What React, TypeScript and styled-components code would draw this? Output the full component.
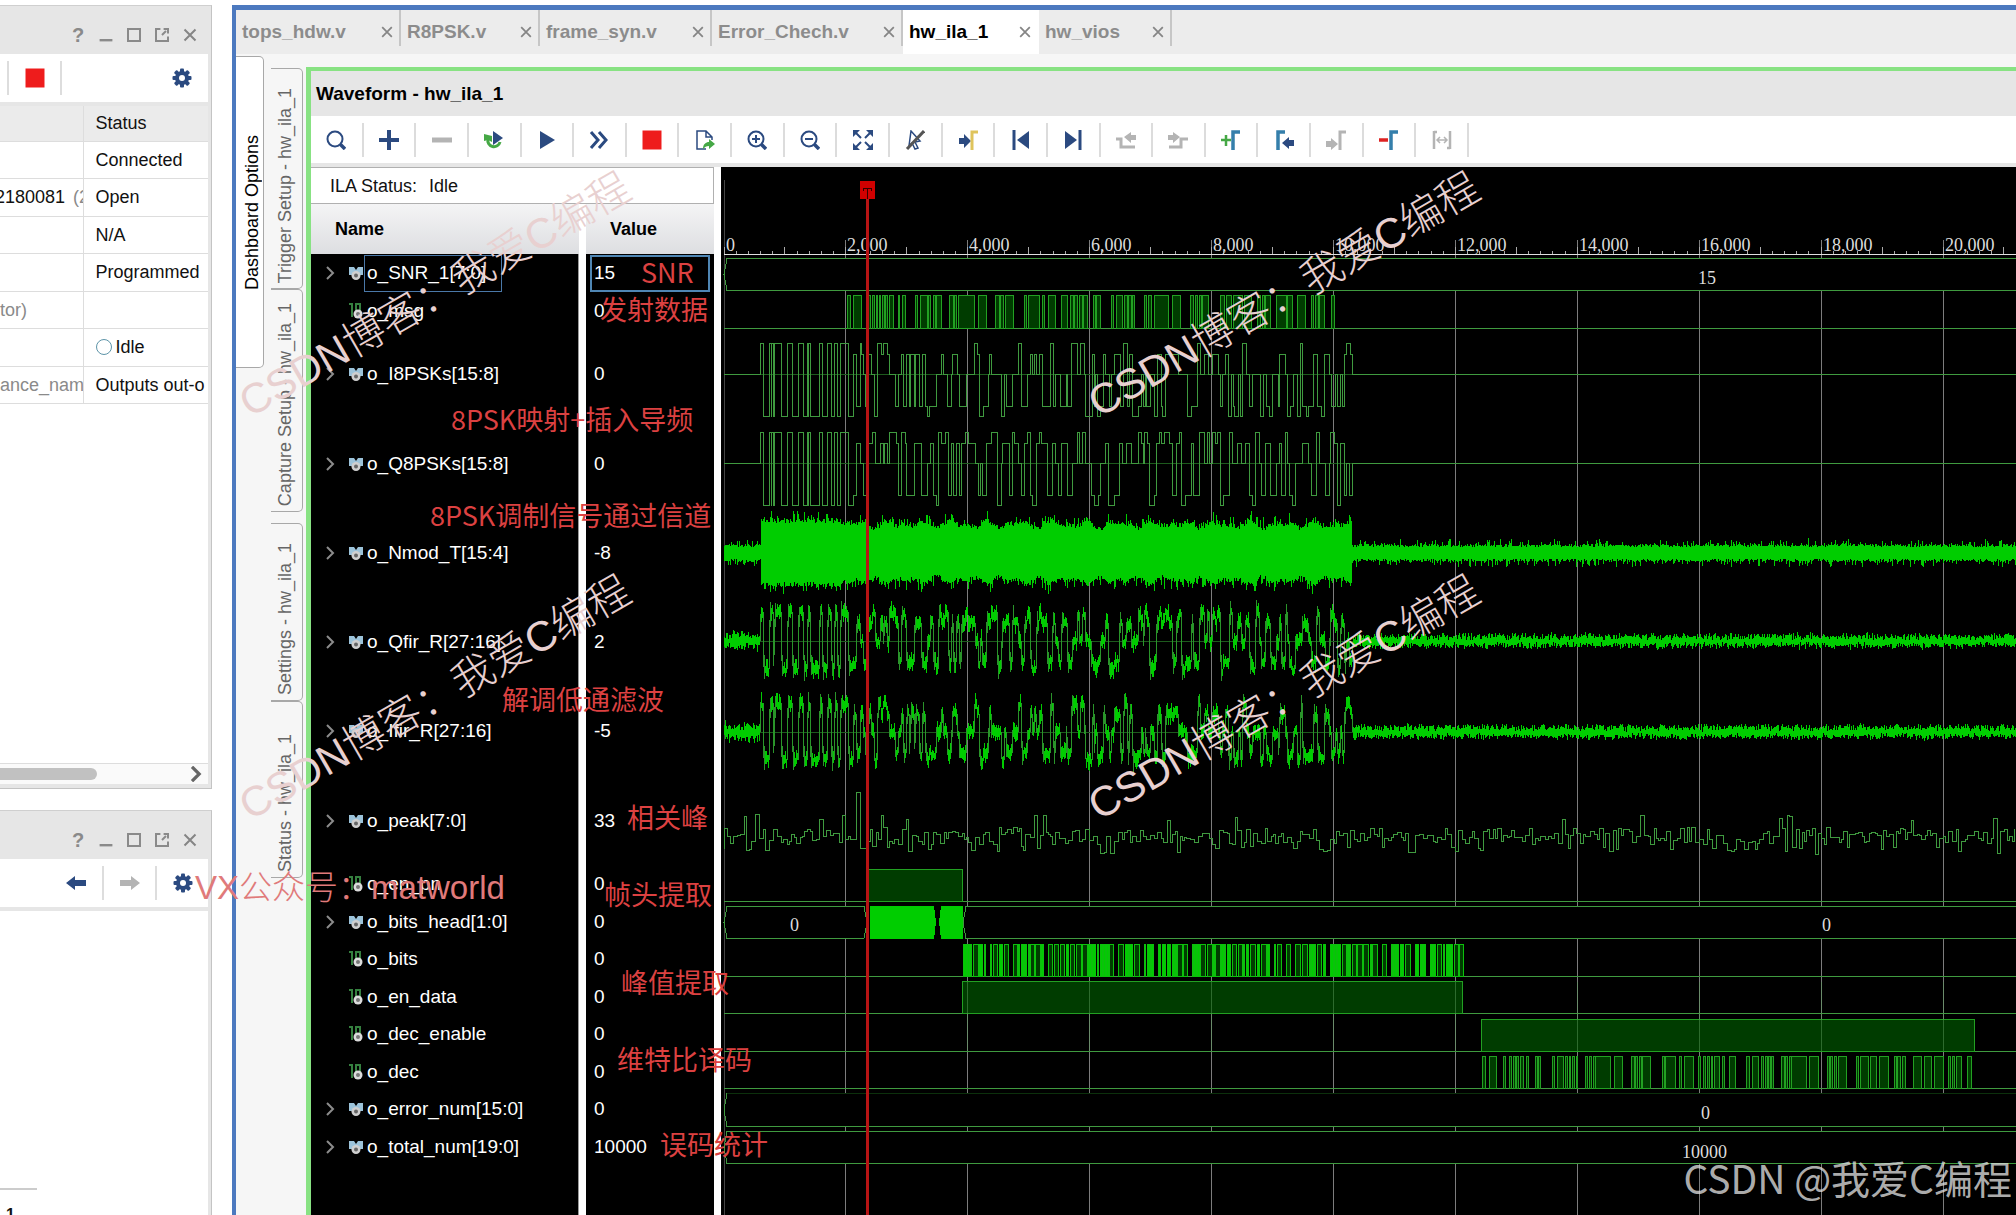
import React from "react";
import styled, { createGlobalStyle, css } from "styled-components";

const NAVY = "#2b4a80";
const GREY = "#b4b4b4";
const GREEN = "#45a845";

const Global = createGlobalStyle`
  * { box-sizing: border-box; }
  body { margin: 0; background: #fff; overflow: hidden; }
  button { border: 0; background: none; padding: 0; margin: 0; font: inherit; color: inherit; }
`;

const Page = styled.div`
  position: relative;
  display: flex;
  gap: 20px;
  height: 100vh;
  padding-top: 5px;
  overflow: hidden;
  font: 18px/24px "Liberation Sans", Arial, sans-serif;
  color: #111;
`;

/* ---------- left side ---------- */

const Side = styled.aside`
  flex: none;
  width: 212px;
  display: flex;
  flex-direction: column;
  gap: 21px;
`;

const Panel = styled.section<{ $grow?: boolean }>`
  display: flex;
  flex-direction: column;
  border-top: 1px solid #cfcfcf;
  border-right: 1px solid #c4c4c4;
  ${(p) => (p.$grow ? "flex: 1;" : "height: 784px; border-bottom: 1px solid #c4c4c4; padding-bottom: 4px;")}
  padding-right: 3px;
  background: #e6e6e6;
`;

const PanelHead = styled.header`
  display: flex;
  justify-content: flex-end;
  align-items: center;
  height: 48px;
  padding: 10px 4px 0 0;
`;

const HeadButton = styled.button`
  width: 28px;
  height: 28px;
  display: grid;
  place-items: center;
  color: #8a8a8a;
  font-size: 20px;
  font-weight: 700;
`;

const SideTools = styled.div`
  display: flex;
  justify-content: flex-end;
  align-items: center;
  height: 48px;
  background: #fff;
`;

const SideTool = styled.button<{ $rule?: boolean }>`
  width: 53px;
  height: 34px;
  display: grid;
  place-items: center;
  ${(p) => p.$rule && "border-left: 2px solid #ddd;"}
`;

const SideSpace = styled.div`
  width: 95px;
  height: 34px;
  border-left: 2px solid #ddd;
`;

const SideBody = styled.div`
  flex: 1;
  margin-top: 4px;
  background: #fff;
  overflow: hidden;
`;

const StatusTable = styled.table`
  width: 100%;
  table-layout: fixed;
  border-collapse: collapse;
  thead tr { height: 35px; }
  tbody tr { height: 37px; }
  tbody tr:nth-child(even) { height: 38px; }
  th, td {
    padding: 0;
    border-bottom: 1px solid #ddd;
    text-align: left;
    font-weight: 400;
    white-space: nowrap;
    overflow: hidden;
  }
  th { background: #ebebeb; }
  th:last-child, td:last-child { width: 125px; padding-left: 12px; border-left: 1px solid #ddd; }
`;

const Path = styled.td<{ $shift?: number }>`
  color: #8a8a8a;
  text-indent: ${(p) => p.$shift || 0}px;
  b { margin-right: 3px; font-weight: 400; color: #111; }
`;

const Ring = styled.span`
  display: inline-block;
  width: 16px;
  height: 16px;
  margin-right: 4px;
  border: 1px solid #5d94a8;
  border-radius: 50%;
  vertical-align: -2px;
`;

const ScrollRow = styled.div`
  display: flex;
  align-items: center;
  justify-content: space-between;
  height: 21px;
  padding-right: 4px;
  background: #fafafa;
  border-top: 1px solid #ddd;
`;

const Thumb = styled.div`
  width: 97px;
  height: 12px;
  border-radius: 0 6px 6px 0;
  background: #c1c1c1;
`;

const Foot = styled.div`
  display: flex;
  flex-direction: column;
  justify-content: flex-end;
  height: 100%;
  b { height: 12px; padding-left: 6px; font-size: 16px; line-height: 24px; overflow: hidden; }
`;

const FootRule = styled.hr`
  width: 37px;
  margin: 0 0 13px;
  border: 0;
  border-top: 2px solid #ccc;
`;

/* ---------- main window ---------- */

const Main = styled.main`
  flex: 1;
  min-width: 0;
  display: flex;
  flex-direction: column;
  border: solid #4c79bf;
  border-width: 5px 0 0 4px;
  background: #f6f6f6;
`;

const Tabs = styled.nav`
  display: flex;
  height: 44px;
  background: #ececec;
  font-size: 19px;
  font-weight: 700;
`;

const Tab = styled.button<{ $w: number; $on?: boolean }>`
  display: flex;
  justify-content: space-between;
  align-items: center;
  width: ${(p) => p.$w}px;
  height: ${(p) => (p.$on ? 44 : 36)}px;
  padding: ${(p) => (p.$on ? "0 7px 0 6px" : "8px 5px 0 6px")};
  color: ${(p) => (p.$on ? "#000" : "#8c8c8c")};
  background: ${(p) => (p.$on ? "#fff" : "none")};
  border-right: ${(p) => (p.$on ? 0 : 2)}px solid #c6c6c6;
`;

const Body = styled.div`
  flex: 1;
  min-height: 0;
  display: flex;
`;

const Rail = styled.div<{ $w: number; $top: number; $right: number }>`
  flex: none;
  display: flex;
  flex-direction: column;
  width: ${(p) => p.$w}px;
  margin-right: ${(p) => p.$right}px;
  padding-top: ${(p) => p.$top}px;
`;

const RailTab = styled.button<{ $h: number; $on?: boolean; $gap?: boolean }>`
  display: flex;
  align-items: ${(p) => (p.$on ? "center" : "flex-end")};
  justify-content: ${(p) => (p.$on ? "flex-end" : "center")};
  padding: ${(p) => (p.$on ? "2px 0 0" : "0 4px 5px 0")};
  height: ${(p) => p.$h}px;
  margin-bottom: ${(p) => (p.$gap ? 11 : 0)}px;
  border: 1px solid #a8a8a8;
  border-left: 0;
  border-radius: 0 5px 5px 0;
  color: ${(p) => (p.$on ? "#000" : "#666")};
  background: ${(p) => (p.$on ? "#fff" : "#f6f6f6")};
  span { writing-mode: vertical-rl; transform: rotate(180deg); white-space: nowrap; line-height: 22px; }
`;

const Frame = styled.section`
  flex: 1;
  min-width: 0;
  margin-top: 13px;
  display: flex;
  flex-direction: column;
  border: solid #88e283;
  border-width: 4px 0 0 5px;
`;

const Title = styled.h1`
  margin: 0;
  padding: 0 5px;
  font-size: 19px;
  line-height: 45px;
  color: #000;
  background: #e6e6e6;
`;

const ToolBar = styled.div`
  height: 51px;
  background: #fff;
  border-bottom: 4px solid #e6e6e6;
`;

const Tools = styled.div`
  display: grid;
  grid-template-columns: repeat(22, 1fr);
  align-items: center;
  width: 1158px;
  height: 47px;
`;

const Tool = styled.button`
  display: grid;
  place-items: center;
  height: 34px;
  border-right: 2px solid #dcdcdc;
`;

const Work = styled.div`
  flex: 1;
  min-height: 0;
  display: flex;
`;

const Signals = styled.div`
  flex: none;
  width: 410px;
  border-right: 7px solid #fff;
  background: linear-gradient(to right, #000 267px, #999 267px 268px, #fff 268px 275px, #000 275px);
`;

const Status = styled.div`
  height: 37px;
  padding: 6px 19px;
  background: #fff;
  border: 1px solid #b0b0b0;
  border-left: 0;
  span { margin-left: 12px; }
`;

const SignalTable = styled.table`
  width: 403px;
  table-layout: fixed;
  border-collapse: collapse;
  th {
    height: 50px;
    padding: 0 0 0 24px;
    text-align: left;
    color: #000;
    background: linear-gradient(#f4f4f5, #dddee1);
  }
  th:first-child { width: 268px; }
  th:nth-child(2) { width: 7px; padding: 0; background: #fff; }
  td { padding: 0; font-size: 19px; color: #fff; }
`;

const SignalRow = styled.tr<{ $h: number }>`
  height: ${(p) => p.$h}px;
`;

const NameCell = styled.div`
  display: flex;
  align-items: center;
  padding-left: 15px;
`;

const Expander = styled.button<{ $shown: boolean }>`
  display: grid;
  width: 22px;
  height: 20px;
  align-items: center;
  visibility: ${(p) => (p.$shown ? "visible" : "hidden")};
`;

const picked = css`
  border: 1px solid #4a78a8;
`;

const SignalName = styled.span<{ $on?: boolean }>`
  display: flex;
  align-items: center;
  height: 37px;
  min-width: 138px;
  padding: 0 2px;
  border: 1px solid transparent;
  ${(p) => p.$on && picked}
`;

const SignalValue = styled.div<{ $on?: boolean }>`
  display: flex;
  align-items: center;
  height: 37px;
  margin: 0 4px;
  padding: 0 2px;
  border: 2px solid ${(p) => (p.$on ? "#4f86b4" : "transparent")};
`;

const Plot = styled.svg`
  flex: 1;
  min-width: 0;
  height: 100%;
  background: #000;
  text { font: 18px "Liberation Serif", "Times New Roman", serif; fill: #dcdcdc; }
`;

/* ---------- notes written over the window ---------- */

const Note = styled.span<{ $x: number; $y: number }>`
  position: absolute;
  left: ${(p) => p.$x}px;
  top: ${(p) => p.$y}px;
  font: 27px/30px "Noto Sans CJK SC", sans-serif;
  color: #dc4141;
  white-space: nowrap;
`;

const Slanted = styled.span<{ $x: number; $y: number }>`
  position: absolute;
  left: ${(p) => p.$x}px;
  top: ${(p) => p.$y}px;
  font: 300 42px/42px "Liberation Sans", "Noto Sans CJK SC", sans-serif;
  color: #e8d0d0;
  white-space: nowrap;
  transform: rotate(-30deg);
  transform-origin: left center;
  pointer-events: none;
`;

const Account = styled.span`
  position: absolute;
  left: 195px;
  top: 869px;
  font: 300 33px/38px "Liberation Sans", "Noto Sans CJK SC", sans-serif;
  color: #e07a7a;
  white-space: nowrap;
`;

const Credit = styled.span`
  position: absolute;
  right: 4px;
  bottom: 9px;
  font: 39px/58px "Noto Sans CJK SC", sans-serif;
  color: rgba(220, 220, 220, 0.8);
  white-space: nowrap;
`;

/* ---------- icons ---------- */

const Ico = ({ children, s = 20 }: { children: React.ReactNode; s?: number }) => (
  <svg width={s} height={s} viewBox="0 0 20 20" fill="none" aria-hidden="true">{children}</svg>
);

const Gear = () => (
  <Ico>
    {[0, 45, 90, 135].map((a) => (
      <rect key={a} x="8" y="0.500" width="4" height="19" rx="1" fill={NAVY} transform={`rotate(${a} 10 10)`} />
    ))}
    <circle cx="10" cy="10" r="7" fill={NAVY} />
    <circle cx="10" cy="10" r="3" fill="#fff" />
  </Ico>
);

const Close = ({ s = 16 }: { s?: number }) => (
  <svg width={s} height={s} viewBox="0 0 16 16" stroke="#858585" strokeWidth="2" aria-hidden="true">
    <path d="M2.500 2.500l11 11M13.500 2.500l-11 11" />
  </svg>
);

const Stop = () => <Ico><path d="M.5.5h19v19H.5z" fill="#ee1c1c" /></Ico>;
const ArrowR = ({ c }: { c: string }) => <Ico><path d="M0 7h11V3l9 7-9 7v-4H0z" fill={c} /></Ico>;
const ArrowL = ({ c }: { c: string }) => <Ico><path d="M20 7H9V3l-9 7 9 7v-4h11z" fill={c} /></Ico>;

const Lens = ({ children }: { children?: React.ReactNode }) => (
  <>
    <circle cx="9" cy="9" r="7.500" stroke={NAVY} strokeWidth="2" />
    <path d="M14.500 14.500l4.500 4.500" stroke={NAVY} strokeWidth="3.500" />
    {children}
  </>
);

const TOOLS: [string, React.ReactNode][] = [
  ["Search", <Lens />],
  ["Add", <path d="M10 0v20M0 10h20" stroke={NAVY} strokeWidth="4" />],
  ["Remove", <path d="M0 10h20" stroke={GREY} strokeWidth="5" />],
  ["Run trigger repeatedly", <><path d="M4 9a6 6 0 1 0 12 3" stroke={GREEN} strokeWidth="3" /><path d="M0 11V4l8 2v6l-4-2z" fill={GREEN} /><path d="M9 1l10 7-10 7z" fill={NAVY} /></>],
  ["Run trigger", <path d="M3 1l15 9-15 9z" fill={NAVY} />],
  ["Run immediately", <path d="M2 2l7 8-7 8M10 2l7 8-7 8" stroke={NAVY} strokeWidth="3" />],
  ["Stop", <path d="M.5.5h19v19H.5z" fill="#ee1c1c" />],
  ["Export", <><path d="M11 19H2V1h9l6 6v3M11 1v6h6" stroke={NAVY} strokeWidth="1.500" /><path d="M8 19c0-5 3-7 6-7V9l6 5-6 5v-3c-3 0-4 1-6 3z" fill={GREEN} /></>],
  ["Zoom in", <Lens><path d="M9 5v8M5 9h8" stroke={NAVY} strokeWidth="2" /></Lens>],
  ["Zoom out", <Lens><path d="M5 9h8" stroke={NAVY} strokeWidth="2" /></Lens>],
  ["Zoom fit", <><path d="M3 3l5 5M17 3l-5 5M3 17l5-5M17 17l-5-5" stroke={NAVY} strokeWidth="2" /><path d="M0 0h7L0 7zM20 0h-7l7 7zM0 20h7l-7-7zM20 20h-7l7-7z" fill={NAVY} /></>],
  ["Clear cursor", <><path d="M6 1l9 10-5 1 3 6-3 1-3-6-3 3z" stroke={NAVY} strokeWidth="1.500" /><path d="M19 1L2 19" stroke="#555" strokeWidth="3" /></>],
  ["Go to cursor", <><path d="M1 8h5V4l7 7-7 7v-4H1z" fill={NAVY} /><path d="M14 20V2h6" stroke="#dfc45c" strokeWidth="3" /></>],
  ["First", <><path d="M3 0v20" stroke={NAVY} strokeWidth="3" /><path d="M18 1v18L6 10z" fill={NAVY} /></>],
  ["Last", <><path d="M17 0v20" stroke={NAVY} strokeWidth="3" /><path d="M2 1v18l12-9z" fill={NAVY} /></>],
  ["Previous transition", <><path d="M0 9h5v8h14" stroke={GREY} strokeWidth="3" /><path d="M20 5h-5V2L8 7l7 6v-3h5z" fill={GREY} /></>],
  ["Next transition", <><path d="M1 17h12V9h7" stroke={GREY} strokeWidth="3" /><path d="M0 5h5V2l7 5-7 6v-3H0z" fill={GREY} /></>],
  ["Add marker", <><path d="M5 5v11M0 10h10" stroke={GREEN} strokeWidth="2.500" /><path d="M12 20V2h7" stroke="#357fab" strokeWidth="3.500" /></>],
  ["Previous marker", <><path d="M4 20V2h7" stroke="#357fab" strokeWidth="3.500" /><path d="M20 10h-5V7l-7 6 7 6v-3h5z" fill={NAVY} /></>],
  ["Next marker", <><path d="M0 11h5V8l7 6-7 6v-3H0z" fill={GREY} /><path d="M14 20V2h6" stroke={GREY} strokeWidth="3" /></>],
  ["Remove marker", <><path d="M0 10h9" stroke="#d22" strokeWidth="3.500" /><path d="M12 20V2h7" stroke="#357fab" strokeWidth="3.500" /></>],
  ["Swap cursors", <><path d="M2 1v18M18 1v18M2 2h3M18 18h-3" stroke={GREY} strokeWidth="2.500" /><path d="M5 10h10M8 7l-3 3 3 3M12 7l3 3-3 3" stroke={GREY} strokeWidth="1.500" /></>],
];

const BusIcon = () => (
  <svg width="16" height="16" viewBox="0 0 16 16" aria-hidden="true">
    <path d="M1 2h5l2 3 2-3h5v8H1z" fill="#9cc3da" />
    <circle cx="8" cy="10.500" r="4.500" fill="#cfcfcf" />
    <circle cx="8" cy="10.500" r="2" fill="#666" />
  </svg>
);

const BitIcon = () => (
  <svg width="16" height="16" viewBox="0 0 16 16" fill="none" aria-hidden="true">
    <path d="M1 1h3v13M8 13V1h4v8" stroke="#35803f" strokeWidth="2" />
    <circle cx="10" cy="11" r="4.500" fill="#dcdcdc" />
    <circle cx="10" cy="11" r="2" fill="#777" />
  </svg>
);

/* ---------- signals ---------- */

type Signal = { name: string; value: string; h: number; bus?: boolean };
const SIGNALS: Signal[] = [
  { name: "o_SNR_1[7:0]", value: "15", h: 38, bus: true },
  { name: "o_msg", value: "0", h: 37 },
  { name: "o_I8PSKs[15:8]", value: "0", h: 90, bus: true },
  { name: "o_Q8PSKs[15:8]", value: "0", h: 89, bus: true },
  { name: "o_Nmod_T[15:4]", value: "-8", h: 89, bus: true },
  { name: "o_Qfir_R[27:16]", value: "2", h: 89, bus: true },
  { name: "o_Ifir_R[27:16]", value: "-5", h: 90, bus: true },
  { name: "o_peak[7:0]", value: "33", h: 89, bus: true },
  { name: "o_en_pn", value: "0", h: 38 },
  { name: "o_bits_head[1:0]", value: "0", h: 37, bus: true },
  { name: "o_bits", value: "0", h: 38 },
  { name: "o_en_data", value: "0", h: 37 },
  { name: "o_dec_enable", value: "0", h: 38 },
  { name: "o_dec", value: "0", h: 37 },
  { name: "o_error_num[15:0]", value: "0", h: 38, bus: true },
  { name: "o_total_num[19:0]", value: "10000", h: 37, bus: true },
];

/* ---------- wave data ---------- */

const LINE = "#3f9a3f";
const SOLID = "#00cd00";
const DARK = "#003c00";
const X0 = 724;
const END = 2016;

const random = (seed: number) => () => {
  seed = (seed * 1664525 + 1013904223) % 4294967296;
  return seed / 4294967296;
};

type Step = [number, number];
const LEVEL: Record<string, number> = { H: 31, h: 20, z: 0, l: -32, L: -42 };
const at = (u: number) => Math.round(720 + u / 2.376);
const steps = (s: string): Step[] =>
  s.trim().split(/\s+/).map((t) => [at(parseInt(t, 10)), LEVEL[t.slice(-1)]]);

const PREAMBLE =
  "95H 103L 117H 120L 121H 125L 129H 146L 160H 171L 185H 197L 207H 209L 210H 215L 236H 243L 255H 264L 270H 277L 285H 304L ";
const I_STEPS = steps(PREAMBLE +
  "317h 323l 332H 336h 340z 345l 352h 358z 366L 374H 382h 388H 396h 402z 416l 423z 430h 434l 443h 449l 452h 460l 464h 473l 479h 487l 491L 497l 514z 526h 531z 540l 548z 551h 562z 569l 584z 603H 611h 615L 624l 637z 640h 645z 667L 674z 680l 693z 709H 715l 730z 736h 741z 746h 751z 758h 766l 783H 791l 797z 808l 821z 824l 833H 848z 855H 864z 868L 884h 888l 892z 896L 904l 909h 915z 925l 929z 937h 950l 958H 966l 972h 978L 993l 1000z 1006l 1010z 1013l 1022z 1030L 1038h 1047l 1050L 1057h 1088z 1110L 1118l 1134H 1140z 1151h 1159z 1168h 1183z 1188l 1193z 1200h 1208L 1214z 1218l 1222L 1230z 1236L 1241H 1250z 1257l 1264z 1283L 1290z 1298l 1305L 1312z 1325l 1329h 1342z 1348L 1355l 1362z 1370L 1378H 1384l 1392L 1398l 1408h 1418l 1427L 1436h 1446z 1452l 1462z 1467l 1473z 1477l 1483h 1488H 1496h 1502z");
const Q_STEPS = steps(PREAMBLE +
  "317l 323h 333z 340l 349h 361H 368z 381h 387z 390h 396z 401H 417h 422l 430H 439h 443l 462h 477l 493z 498h 507l 514L 518H 526h 535H 541l 549h 553l 561h 567l 573h 582H 590h 605z 613l 617z 623l 631h 645H 658L 667z 671h 687l 693H 699h 708z 714l 723h 730H 737l 742L 750h 758H 763h 776l 788h 796z 802l 811h 824l 836z 848H 854z 861H 868z 881l 889L 897l 902z 914h 921L 937l 948h 956z 964h 977z 992H 1000h 1004z 1008H 1014h 1020L 1030l 1036h 1042H 1048h 1056H 1067h 1075l 1084h 1090H 1096L 1105l 1118h 1124l 1137H 1150z 1156H 1162z 1168H 1176h 1182H 1188L 1196l 1209H 1216z 1228h 1237z 1248h 1256l 1264L 1270H 1280z 1286l 1294h 1306l 1320z 1327h 1334l 1342H 1348z 1352l 1360L 1367z 1382h 1396z 1404l 1416H 1424z 1438l 1446z 1450H 1460h 1466L 1472h 1482l 1488z 1494l 1502z");

const stepPath = (list: Step[], zero: number) => {
  let d = `M${X0} ${zero}`;
  list.forEach(([x, v]) => { d += `H${x + 0.5}V${zero - v}`; });
  return d + `H${END}`;
};

/* Filtered copy of a stepped signal: thin slopes, noisy plateaus. */
const filtered = (list: Step[], zero: number, seed: number) => {
  const r = random(seed);
  const raw = (x: number) => {
    let v = 0;
    for (const [sx, sv] of list) { if (sx <= x) v = sv; else break; }
    return v > 0 ? v * 0.92 : v * 0.67;
  };
  let slope = "";
  let flat = "";
  let last = 0;
  for (let x = X0; x < END; x++) {
    const quiet = x < 761 || x > 1350;
    const v = (raw(x - 1) + raw(x) * 3) / 4;
    const n = quiet ? (x < 761 ? 5 + r() * 8 : 4 + r() * 5) : 5 + r() * 7;
    const j = (r() - 0.5) * (quiet ? 5 : 7);
    const y = zero - v + j;
    if (Math.abs(v - last) > 8) slope += `M${x + 0.5} ${(zero - last).toFixed(0)}V${(zero - v + (v > last ? -1 : 1) * n).toFixed(0)}`;
    else flat += `M${x + 0.5} ${(y - n / 1.4).toFixed(0)}V${(y + n / 1.4).toFixed(0)}`;
    last = v;
  }
  return { slope, flat };
};

const carrier = (() => {
  const r = random(77);
  const spike = (on: boolean) => (r() > 0.75 ? r() * (on ? 9 : 6) : 0);
  let d = "";
  for (let x = X0; x < END; x++) {
    const on = x > 760 && x < 1352;
    const swell = x < 840 ? 30 : 26 + 4 * Math.sin(x / 4) * Math.sin(x / 17);
    const a = on ? swell + r() * 5 + spike(on) : 6 + r() * 3 + spike(on);
    const b = on ? swell + r() * 5 + spike(on) - 1 : 6 + r() * 3 + spike(on);
    d += `M${x + 0.5} ${(553 - a).toFixed(0)}V${(553 + b).toFixed(0)}`;
  }
  return d;
})();

const peak = (() => {
  const r = random(4242);
  let d = `M${X0} 848.5`;
  let x = X0;
  while (x < END) {
    const near = x > 850 && x < 858;
    if (near) { d += "H856.500V792.500H860.500V848.500"; x = 866; continue; }
    const spike = r();
    const y = spike > 0.95 ? 814 + r() * 6 : spike < 0.12 ? 846 + r() * 8 : 827 + r() * 17;
    d += `H${x + 0.5}V${Math.round(y) + 0.5}`;
    x += 2 + Math.floor(r() * 3);
  }
  return d;
})();

type Pulse = [number, number];
const pairs = (s: string, f: (u: number) => number): Pulse[] =>
  s.trim().split(/\s+/).map((p) => p.split("-").map((n) => f(Number(n))) as Pulse);

const MSG = pairs(
  "302-309 315-334 346-356 361-367 370-374 377-381 385-389 392-396 402-410 422-426 432-439 463-468 475-491 494-499 506-510 514-524 543-553 556-561 565-603 612-631 654-663 666-673 676-696 723-728 732-757 765-770 779-797 810-825 831-839 842-849 853-859 863-872 886-891 894-902 928-934 941-955 960-967 970-976 979-983 1007-1013 1017-1024 1031-1065 1075-1094 1117-1124 1128-1134 1138-1143 1146-1160 1188-1198 1202-1214 1218-1240 1246-1262 1276-1284 1288-1292 1296-1306 1321-1344 1348-1360 1371-1391 1404-1410 1414-1420 1424-1434 1452-1458", at);
const BITS = (() => {
  const r = random(909);
  const out: Pulse[] = [];
  let x = 963;
  while (x < 1461) {
    const w = 1 + Math.floor(r() * 5);
    out.push([x, Math.min(x + w, 1463)]);
    x += w + (r() > 0.88 ? 5 : 1 + Math.floor(r() * 2));
  }
  return out;
})();
const DEC = pairs(
  "252-258 269-287 303-307 319-323 327-332 335-339 344-353 361-366 381-386 390-395 424-428 436-452 455-461 465-469 474-478 482-486 505-511 515-521 525-529 531-567 577-596 619-625 629-634 638-643 646-665 694-699 703-726 736-741 749-771 785-790 797-802 806-811 815-819 823-835 843-849 861-874 903-910 918-933 938-944 948-953 957-962 965-969 989-995 999-1003 1007-1012 1014-1049 1058-1079 1102-1107 1110-1115 1118-1124 1128-1148 1173-1179 1183-1202 1207-1223 1230-1251 1266-1271 1275-1282 1286-1295 1314-1334 1341-1357 1366-1387 1401-1406 1410-1416 1420-1431 1448-1456",
  (u) => Math.round(1380 + u / 2.465));

const QF = filtered(Q_STEPS, 641, 5);
const IF = filtered(I_STEPS, 732, 9);

const Pulses = ({ list, top, base, bright }: { list: Pulse[]; top: number; base: number; bright?: boolean }) => (
  <>
    <path d={`M${X0} ${base}H${END}`} stroke={LINE} />
    {list.map(([a, b]) => (
      <rect key={a} x={a + 0.5} y={top} width={Math.max(b - a, 1)} height={base - top}
        fill={bright && b - a < 4 ? SOLID : DARK} stroke={bright ? "#0cc00c" : "#22a022"} />
    ))}
  </>
);

const Bus = ({ top, base, from = X0, to = END + 4, dim }: { top: number; base: number; from?: number; to?: number; dim?: boolean }) => {
  const mid = (top + base) / 2;
  return (
    <g stroke={LINE}>
      <path d={`M${from} ${mid}L${from + 3} ${top}H${to - 3}L${to} ${mid}L${to - 3} ${base}H${from + 3}z`} fill="#000" stroke="none" />
      <path d={`M${from + 3} ${base}H${to - 3}`} />
      <path d={`M${from + 3} ${top}H${to - 3}`} stroke={dim ? "#0c300c" : LINE} />
      <path d={`M${from + 3} ${top}L${from} ${mid}L${from + 3} ${base}M${to - 3} ${base}L${to} ${mid}L${to - 3} ${top}`} fill="none" />
    </g>
  );
};

const Waves = () => {
  const major = Array.from({ length: 11 }, (_, k) => Math.floor(X0 + k * 121.9));
  const minor = Array.from({ length: 106 }, (_, k) => k);
  return (
    <Plot viewBox="721 167 1295 1048" preserveAspectRatio="xMinYMin slice" shapeRendering="crispEdges" role="img" aria-label="Waveform">
      <path d="M724.500 180V1215" stroke="#444" />
      {major.slice(1).map((x) => <path key={x} d={`M${x + 0.5} 240V1215`} stroke="#7c7c7c" />)}
      {minor.map((k) => {
        const x = Math.floor(X0 + k * 12.19) + 0.5;
        return <path key={k} d={`M${x} ${k % 5 ? 251 : 247}V254`} stroke="#aaa" />;
      })}
      <path d={`M${X0} 254.500H${END}`} stroke="#e0e0e0" />
      {major.map((x, k) => (
        <text key={x} x={x + 2} y="251">{k === 0 ? "0" : `${k * 2},000`}</text>
      ))}

      <Bus top={258.5} base={290.5} />
      <text x="1698" y="284">15</text>

      <Pulses list={MSG} top={295.5} base={328.5} />
      <path d={`M${X0} 374.500H${END}M${X0} 463.500H${END}`} stroke="#1d5a1d" />
      <path d={stepPath(I_STEPS, 374.5)} fill="none" stroke={LINE} />
      <path d={stepPath(Q_STEPS, 463.5)} fill="none" stroke={LINE} />
      <path d={carrier} stroke={SOLID} />
      <path d={`M${X0} 641.500H${END}M${X0} 732.500H${END}`} stroke="#1d5a1d" />
      {[QF, IF].map((f, i) => (
        <g key={i}>
          <path d={f.slope} stroke="#2a942a" />
          <path d={f.flat} stroke={SOLID} />
        </g>
      ))}
      <path d={peak} fill="none" stroke={LINE} />

      <Pulses list={[[868, 962]]} top={869.5} base={901.5} />
      <Bus top={906.5} base={938.5} to={867} />
      <Bus top={906.5} base={938.5} from={963} />
      <path d="M870 906h64l2 16-2 17h-64zM941 906h22v33h-22l-2-17z" fill={SOLID} />
      <text x="790" y="931">0</text>
      <text x="1822" y="931">0</text>
      <Pulses list={BITS} top={944.5} base={976.5} bright />
      <Pulses list={[[962, 1462]]} top={981.5} base={1013.5} />
      <Pulses list={[[1481, 1974]]} top={1019.5} base={1051.5} />
      <Pulses list={DEC} top={1056.5} base={1088.5} />
      {major.slice(2).map((x) => <path key={x} d={`M${x + 0.5} 982V1051`} stroke="#5a9a5a" opacity="0.5" />)}
      <Bus top={1093.5} base={1126.5} dim />
      <text x="1701" y="1119">0</text>
      <Bus top={1131.5} base={1163.5} />
      <text x="1682" y="1158">10000</text>

      <path d="M867.500 199V1215" stroke="#b81414" strokeWidth="3" />
      <path d="M860 181h15v18h-15z" fill="#d00000" />
      <path d="M867.500 199V188M863.500 191V188h8v3" stroke="#300" fill="none" />
    </Plot>
  );
};

/* ---------- page parts ---------- */

const HeadButtons = () => (
  <PanelHead>
    <HeadButton aria-label="Help">?</HeadButton>
    <HeadButton aria-label="Minimize"><Ico s={16}><path d="M2 16.500h16" stroke="#8a8a8a" strokeWidth="3" /></Ico></HeadButton>
    <HeadButton aria-label="Maximize"><Ico s={16}><path d="M2.500 2.500h15v15h-15z" stroke="#8a8a8a" strokeWidth="2.500" /></Ico></HeadButton>
    <HeadButton aria-label="Float">
      <Ico s={16}><path d="M8 2.500H2.500v15h15V12M10 10l5-5M12 2.500h5.500v5.500" stroke="#8a8a8a" strokeWidth="2.500" /></Ico>
    </HeadButton>
    <HeadButton aria-label="Close"><Close /></HeadButton>
  </PanelHead>
);

const HARDWARE: [React.ReactNode, React.ReactNode, number?][] = [
  ["", "Connected"],
  [<><b>2180081</b> (2</>, "Open", -5],
  ["", "N/A"],
  ["", "Programmed"],
  ["tor)", ""],
  ["", <><Ring />Idle</>],
  ["ance_nam", "Outputs out-o"],
];

const TABS: [string, number][] = [
  ["tops_hdw.v", 165], ["R8PSK.v", 139], ["frame_syn.v", 172], ["Error_Chech.v", 191], ["hw_ila_1", 136], ["hw_vios", 133],
];

const NOTES: [string, number, number][] = [
  ["SNR", 641, 257], ["发射数据", 600, 294], ["8PSK映射+插入导频", 451, 404], ["8PSK调制信号通过信道", 430, 500],
  ["解调低通滤波", 502, 684], ["相关峰", 627, 802], ["帧头提取", 604, 879], ["峰值提取", 621, 967],
  ["维特比译码", 617, 1044], ["误码统计", 660, 1129],
];

export default function App() {
  return (
    <Page>
      <Global />
      <Side>
        <Panel>
          <HeadButtons />
          <SideTools>
            <SideTool $rule aria-label="Stop"><Stop /></SideTool>
            <SideSpace />
            <SideTool aria-label="Settings"><Gear /></SideTool>
          </SideTools>
          <SideBody>
            <StatusTable>
              <thead><tr><th></th><th>Status</th></tr></thead>
              <tbody>
                {HARDWARE.map(([path, status, shift], i) => (
                  <tr key={i}><Path $shift={shift}>{path}</Path><td>{status}</td></tr>
                ))}
              </tbody>
            </StatusTable>
          </SideBody>
          <ScrollRow>
            <Thumb />
            <Ico s={16}><path d="M5 1l9 9-9 9" stroke="#666" strokeWidth="4" /></Ico>
          </ScrollRow>
        </Panel>
        <Panel $grow>
          <HeadButtons />
          <SideTools>
            <SideTool aria-label="Back"><ArrowL c={NAVY} /></SideTool>
            <SideTool $rule aria-label="Forward"><ArrowR c={GREY} /></SideTool>
            <SideTool $rule aria-label="Settings"><Gear /></SideTool>
          </SideTools>
          <SideBody>
            <Foot><FootRule /><b>1</b></Foot>
          </SideBody>
        </Panel>
      </Side>

      <Main>
        <Tabs>
          {TABS.map(([t, w]) => (
            <Tab key={t} $w={w} $on={t === "hw_ila_1"}>{t}<Close s={14} /></Tab>
          ))}
        </Tabs>
        <Body>
          <Rail $w={28} $top={2} $right={7}>
            <RailTab $h={312} $on><span>Dashboard Options</span></RailTab>
          </Rail>
          <Rail $w={32} $top={14} $right={3}>
            <RailTab $h={221}><span>Trigger Setup - hw_ila_1</span></RailTab>
            <RailTab $h={223} $gap><span>Capture Setup - hw_ila_1</span></RailTab>
            <RailTab $h={178}><span>Settings - hw_ila_1</span></RailTab>
            <RailTab $h={177}><span>Status - hw_ila_1</span></RailTab>
          </Rail>
          <Frame>
            <Title>Waveform - hw_ila_1</Title>
            <ToolBar>
              <Tools>
                {TOOLS.map(([label, icon]) => <Tool key={label} aria-label={label}><Ico>{icon}</Ico></Tool>)}
              </Tools>
            </ToolBar>
            <Work>
              <Signals>
                <Status>ILA Status:<span>Idle</span></Status>
                <SignalTable>
                  <thead><tr><th>Name</th><th></th><th>Value</th></tr></thead>
                  <tbody>
                    {SIGNALS.map((s, i) => (
                      <SignalRow key={s.name} $h={s.h}>
                        <td>
                          <NameCell>
                            <Expander $shown={!!s.bus} aria-label={`Expand ${s.name}`}>
                              <svg width="9" height="14" fill="none" stroke="#8c8c8c" strokeWidth="2" aria-hidden="true"><path d="M1 1l6 6-6 6" /></svg>
                            </Expander>
                            {s.bus ? <BusIcon /> : <BitIcon />}
                            <SignalName $on={i === 0}>{s.name}</SignalName>
                          </NameCell>
                        </td>
                        <td></td>
                        <td><SignalValue $on={i === 0}>{s.value}</SignalValue></td>
                      </SignalRow>
                    ))}
                  </tbody>
                </SignalTable>
              </Signals>
              <Waves />
            </Work>
          </Frame>
        </Body>
      </Main>

      {NOTES.map(([t, x, y]) => <Note key={t} $x={x} $y={y}>{t}</Note>)}
      {[[243, 385], [1092, 385], [243, 788], [1092, 788]].map(([x, y]) => (
        <Slanted key={`${x}-${y}`} $x={x} $y={y}>CSDN博客：我爱C编程</Slanted>
      ))}
      <Account>VX公众号：matworld</Account>
      <Credit>CSDN @我爱C编程</Credit>
    </Page>
  );
}
